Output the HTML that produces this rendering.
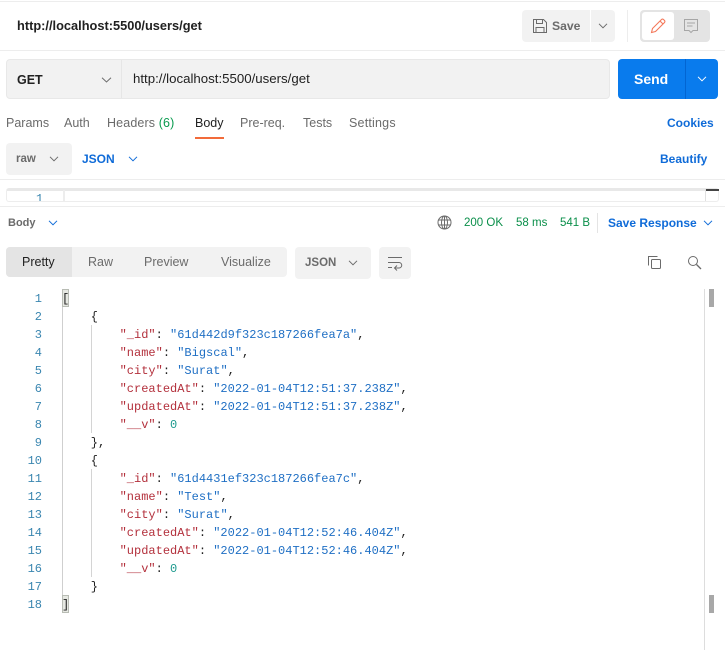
<!DOCTYPE html>
<html><head><meta charset="utf-8">
<style>
html,body{margin:0;padding:0;background:#fff}
body{width:725px;height:650px;position:relative;overflow:hidden;font-family:"Liberation Sans",sans-serif;font-size:12px;color:#6b6b6b}
.a{position:absolute;white-space:nowrap}
.b{position:absolute}
svg{position:absolute;fill:none}
.t{line-height:16px;height:16px}
.blue{color:#0f6bd8}
.code{font-family:"Liberation Mono",monospace;font-size:12px;line-height:18px;white-space:pre;position:absolute;left:62px;top:290px;color:#212121}
.nums{font-family:"Liberation Mono",monospace;font-size:12px;line-height:18px;position:absolute;left:14px;width:28px;top:290px;text-align:right;color:#3a86b0;white-space:pre}
.k{color:#b3303c}.s{color:#1f6fc4}.n{color:#1d9a8e}
</style></head><body>
<div class="b" style="left:0;top:1px;width:725px;height:1px;background:#ededed"></div>
<div class="a t" style="left:17px;top:18px;font-weight:700;color:#212121;font-size:12.800px">http://localhost:5500/users/get</div>
<div class="b" style="left:0;top:50px;width:725px;height:1px;background:#ededed"></div>

<div class="b" style="left:522px;top:10px;width:68px;height:32px;background:#f2f2f2;border-radius:4px 0 0 4px"></div>
<svg style="left:532px;top:18px" width="16" height="16" viewBox="0 0 16 16" stroke="#6b6b6b" stroke-width="1"><path d="M1.500 1.500h10l3 3v10h-13z"/><path d="M4.500 1.500v4h6v-4M4 14.500v-5h8v5"/></svg>
<div class="a t" style="left:552px;top:18px;font-weight:700;color:#6b6b6b;font-size:12.200px">Save</div>
<div class="b" style="left:591px;top:10px;width:24px;height:32px;background:#f2f2f2;border-radius:0 4px 4px 0"></div>
<svg style="left:598px;top:23px" width="10" height="6" viewBox="0 0 10 6" stroke="#6b6b6b"><path d="M1 .8l4 4 4-4"/></svg>
<div class="b" style="left:627px;top:10px;width:1px;height:32px;background:#ededed"></div>
<div class="b" style="left:640px;top:10px;width:70px;height:32px;background:#e4e4e4;border-radius:4px"></div>
<div class="b" style="left:642px;top:12px;width:32px;height:28px;background:#fff;border-radius:3px"></div>
<svg style="left:650px;top:18px" width="16" height="16" viewBox="0 0 16 16" stroke="#f4785a" stroke-width="1.100"><path d="M1.500 14.500l1-4L11.500 1.500q1-.8 2 0l1 1q.8 1 0 2l-9 9z M10 3l3 3"/></svg>
<svg style="left:683px;top:18px" width="16" height="17" viewBox="0 0 16 17" stroke="#a6a6a6"><path d="M1.500 1.500h13v11h-4.500l-2 2-2-2h-4.500z M4 5h8M4 8h5.500"/></svg>

<div class="b" style="left:6px;top:59px;width:602px;height:38px;background:#f2f2f2;border:1px solid #e8e8e8;border-radius:4px"></div>
<div class="b" style="left:121px;top:60px;width:1px;height:38px;background:#e6e6e6"></div>
<div class="a t" style="left:17px;top:72px;font-weight:700;color:#212121;font-size:12.500px">GET</div>
<svg style="left:101px;top:77px" width="11" height="6" viewBox="0 0 11 6" stroke="#6b6b6b"><path d="M1 .8l4.500 4.200 4.500-4.200"/></svg>
<div class="a t" style="left:133px;top:71px;color:#212121;font-size:13.250px">http://localhost:5500/users/get</div>
<div class="b" style="left:618px;top:59px;width:100px;height:40px;background:#097bed;border-radius:4px"></div>
<div class="b" style="left:685px;top:59px;width:1px;height:40px;background:#0265d2"></div>
<div class="a" style="left:634px;top:70px;color:#fff;font-weight:700;font-size:14px;line-height:18px">Send</div>
<svg style="left:697px;top:76px" width="10" height="6" viewBox="0 0 10 6" stroke="#fff"><path d="M1 .8l4 4 4-4"/></svg>

<div class="a t" style="left:6px;top:115px;font-size:12.500px">Params</div>
<div class="a t" style="left:64px;top:115px;font-size:12.500px">Auth</div>
<div class="a t" style="left:107px;top:115px;font-size:12.500px;letter-spacing:.13px">Headers <span style="color:#0a9b4f">(6)</span></div>
<div class="a t" style="left:195px;top:115px;font-size:12.500px;color:#212121">Body</div>
<div class="b" style="left:195px;top:137px;width:29px;height:2px;background:#f26b3a"></div>
<div class="a t" style="left:240px;top:115px;font-size:12.500px">Pre-req.</div>
<div class="a t" style="left:303px;top:115px;font-size:12.500px">Tests</div>
<div class="a t" style="left:349px;top:115px;font-size:12.500px;letter-spacing:.2px">Settings</div>
<div class="a t blue" style="left:667px;top:115px;font-weight:700;font-size:12px">Cookies</div>

<div class="b" style="left:6px;top:143px;width:66px;height:32px;background:#f2f2f2;border-radius:4px"></div>
<div class="a t" style="left:16px;top:151px;font-weight:700;font-size:11.500px">raw</div>
<svg style="left:49px;top:156px" width="10" height="6" viewBox="0 0 10 6" stroke="#6b6b6b"><path d="M1 .8l4 4 4-4"/></svg>
<div class="a t blue" style="left:82px;top:151px;font-weight:700;font-size:12px">JSON</div>
<svg style="left:128px;top:156px" width="10" height="6" viewBox="0 0 10 6" stroke="#0f6bd8"><path d="M1 .8l4 4 4-4"/></svg>
<div class="a t blue" style="left:660px;top:151px;font-weight:700;font-size:12px">Beautify</div>

<div class="b" style="left:0;top:179px;width:725px;height:1px;background:#ededed"></div>
<div class="b" style="left:6px;top:188px;width:713px;height:14px;border:1px solid #ededed;border-top:3px solid #e8e8e8;box-sizing:border-box;border-radius:3px"></div>
<div class="b" style="left:63px;top:190px;width:2px;height:11px;background:#ededed"></div>
<div class="a" style="left:36px;top:191px;height:10px;overflow:hidden;font-family:'Liberation Mono',monospace;font-size:12px;line-height:16px;color:#3a86b0">1</div>
<div class="b" style="left:706px;top:189px;width:13px;height:1.500px;background:#444"></div>
<div class="b" style="left:705px;top:189px;width:1px;height:12px;background:#e0e0e0"></div>
<div class="b" style="left:0;top:206px;width:725px;height:1px;background:#ededed"></div>

<div class="a t" style="left:8px;top:215px;font-weight:700;font-size:11px">Body</div>
<svg style="left:48px;top:220px" width="10" height="6" viewBox="0 0 10 6" stroke="#0f6bd8"><path d="M1 .8l4 4 4-4"/></svg>
<svg style="left:437px;top:215px" width="15" height="15" viewBox="0 0 15 15" stroke="#6b6b6b"><circle cx="7.500" cy="7.500" r="6.500"/><ellipse cx="7.500" cy="7.500" rx="3" ry="6.500"/><path d="M1 5h13M1 10h13M7.500 1v13"/></svg>
<div class="a t" style="left:464px;top:215px;color:#0a8f4a;font-size:11.500px">200 OK</div>
<div class="a t" style="left:516px;top:215px;color:#0a8f4a;font-size:11.500px">58 ms</div>
<div class="a t" style="left:560px;top:215px;color:#0a8f4a;font-size:11.500px">541 B</div>
<div class="b" style="left:597px;top:213px;width:1px;height:20px;background:#e4e4e4"></div>
<div class="a t blue" style="left:608px;top:215px;font-weight:700;font-size:12px">Save Response</div>
<svg style="left:703px;top:220px" width="10" height="6" viewBox="0 0 10 6" stroke="#0f6bd8"><path d="M1 .8l4 4 4-4"/></svg>

<div class="b" style="left:6px;top:247px;width:281px;height:30px;background:#f2f2f2;border-radius:4px"></div>
<div class="b" style="left:6px;top:247px;width:66px;height:30px;background:#e4e4e4;border-radius:4px 0 0 4px"></div>
<div class="a t" style="left:22px;top:254px;color:#212121;font-size:12.500px">Pretty</div>
<div class="a t" style="left:88px;top:254px;font-size:12.500px">Raw</div>
<div class="a t" style="left:144px;top:254px;font-size:12.500px">Preview</div>
<div class="a t" style="left:221px;top:254px;font-size:12.500px">Visualize</div>
<div class="b" style="left:295px;top:247px;width:76px;height:32px;background:#f2f2f2;border-radius:4px"></div>
<div class="a t" style="left:305px;top:255px;font-weight:700;font-size:11.500px">JSON</div>
<svg style="left:348px;top:260px" width="10" height="6" viewBox="0 0 10 6" stroke="#6b6b6b"><path d="M1 .8l4 4 4-4"/></svg>
<div class="b" style="left:379px;top:247px;width:32px;height:32px;background:#f2f2f2;border-radius:4px"></div>
<svg style="left:387px;top:256px" width="16" height="15" viewBox="0 0 16 15" stroke="#6b6b6b"><path d="M1 1.500h14M1 6.500h11a2.500 2.500 0 0 1 0 5.500H8M1 11.500h4M10 9.500l-2.500 2.500 2.500 2.500"/></svg>
<svg style="left:647px;top:255px" width="15" height="15" viewBox="0 0 15 15" stroke="#6b6b6b"><path d="M10.500 1.500h-9v9"/><rect x="4.500" y="4.500" width="9" height="9" rx="1"/></svg>
<svg style="left:687px;top:255px" width="15" height="15" viewBox="0 0 15 15" stroke="#6b6b6b"><circle cx="6" cy="6" r="4.500"/><path d="M9.500 9.500l4.500 4.500" stroke-width="1.300"/></svg>

<div class="nums">1
2
3
4
5
6
7
8
9
10
11
12
13
14
15
16
17
18</div>
<div class="b" style="left:62px;top:289px;width:1px;height:324px;background:#cfcfcf"></div>
<div class="b" style="left:91px;top:325px;width:1px;height:108px;background:#d4d4d4"></div>
<div class="b" style="left:91px;top:469px;width:1px;height:108px;background:#d4d4d4"></div>
<div class="b" style="left:62px;top:289px;width:7px;height:18px;background:#e6e8e2;border:1px solid #b8bcb4;box-sizing:border-box"></div>
<div class="b" style="left:62px;top:595px;width:7px;height:18px;background:#e6e8e2;border:1px solid #b8bcb4;box-sizing:border-box"></div>
<div class="code">[
    {
        <span class="k">"_id"</span>: <span class="s">"61d442d9f323c187266fea7a"</span>,
        <span class="k">"name"</span>: <span class="s">"Bigscal"</span>,
        <span class="k">"city"</span>: <span class="s">"Surat"</span>,
        <span class="k">"createdAt"</span>: <span class="s">"2022-01-04T12:51:37.238Z"</span>,
        <span class="k">"updatedAt"</span>: <span class="s">"2022-01-04T12:51:37.238Z"</span>,
        <span class="k">"__v"</span>: <span class="n">0</span>
    },
    {
        <span class="k">"_id"</span>: <span class="s">"61d4431ef323c187266fea7c"</span>,
        <span class="k">"name"</span>: <span class="s">"Test"</span>,
        <span class="k">"city"</span>: <span class="s">"Surat"</span>,
        <span class="k">"createdAt"</span>: <span class="s">"2022-01-04T12:52:46.404Z"</span>,
        <span class="k">"updatedAt"</span>: <span class="s">"2022-01-04T12:52:46.404Z"</span>,
        <span class="k">"__v"</span>: <span class="n">0</span>
    }
]</div>
<div class="b" style="left:704px;top:289px;width:1px;height:361px;background:#ddd"></div>
<div class="b" style="left:709px;top:289px;width:5px;height:18px;background:#a8a8a8"></div>
<div class="b" style="left:709px;top:595px;width:5px;height:18px;background:#a8a8a8"></div>
</body></html>
